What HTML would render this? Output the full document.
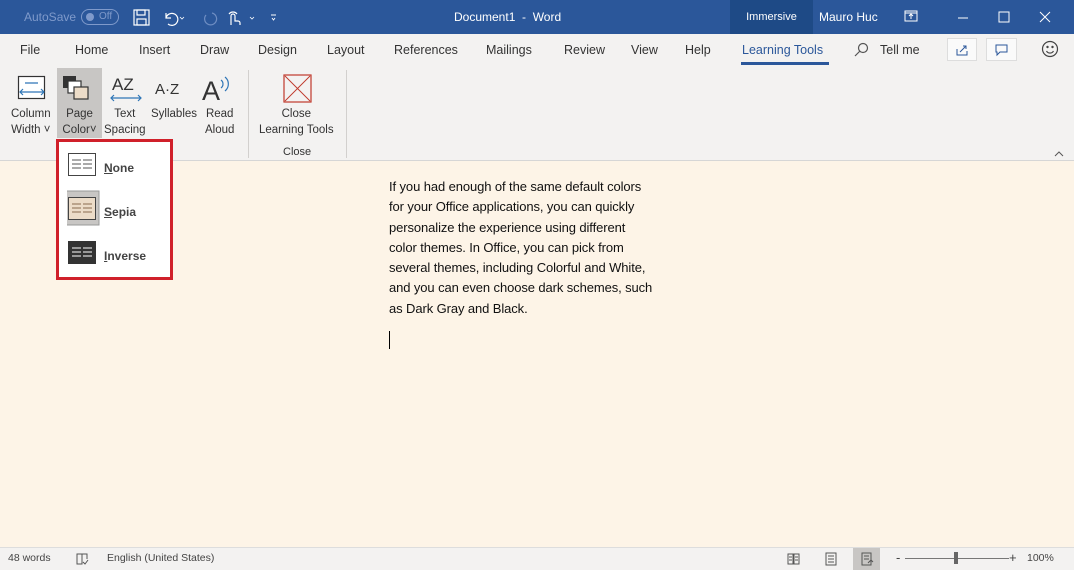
<!DOCTYPE html>
<html><head><meta charset="utf-8"><style>
*{margin:0;padding:0;box-sizing:border-box}
body{width:1074px;height:570px;overflow:hidden;position:relative;font-family:"Liberation Sans",sans-serif;background:#fdf4e7}
.a{position:absolute;white-space:nowrap}
#title{left:0;top:0;width:1074px;height:34px;background:#2b579a;color:#fff;font-size:12px}
#tabs{left:0;top:34px;width:1074px;height:32px;background:#f3f2f1;font-size:12.5px;color:#333}
#rib{left:0;top:66px;width:1074px;height:95px;background:#f3f2f1;border-bottom:1px solid #d6d6d6;font-size:11.5px;color:#333}
#status{left:0;top:547px;width:1074px;height:23px;background:#f3f2f1;border-top:1px solid #ddd;font-size:10.5px;color:#444}
.doc{font-size:13px;color:#111;line-height:20.3px;letter-spacing:-0.1px}
</style></head><body>
<div id="title" class="a">
 <span class="a" style="left:24px;top:10px;color:#7f9acb">AutoSave</span>
 <span class="a" style="left:81px;top:9px;width:38px;height:16px;border:1px solid #7f9acb;border-radius:8px;font-size:10px;color:#7f9acb;padding-left:17px;line-height:14px">Off<span class="a" style="left:4px;top:3px;width:8px;height:8px;border-radius:50%;background:#7f9acb"></span></span>
 <svg class="a" style="left:133px;top:9px" width="150" height="18" fill="none" stroke="#fff" stroke-width="1.2"><rect x="1" y="1" width="15" height="15"/><rect x="4" y="1" width="8" height="5"/><rect x="4" y="10" width="9" height="6"/><path d="M33 4v5h5M33 9a6 6 0 1 1 2 6"/><path d="M47 8l2 2 2-2" stroke-width="0.8"/><path d="M79 4a6 6 0 1 1-6 2" stroke="#6f8ec3"/><path d="M98 16v-9a2 2 0 0 1 4 0v5h3a2 2 0 0 1 2 2v2M96 5a5 5 0 0 1 8 0"/><path d="M117 8l2 2 2-2" stroke-width="0.8"/><path d="M138 6h5M139 9l1.5 2 1.5-2" stroke-width="0.9"/></svg>
 <span class="a" style="left:454px;top:10px">Document1 &nbsp;-&nbsp; Word</span>
 <div class="a" style="left:730px;top:0;width:83px;height:34px;background:#1e4a86;font-size:11px;text-align:center;line-height:35px">Immersive</div>
 <span class="a" style="left:819px;top:10px">Mauro Huc</span>
 <svg class="a" style="left:900px;top:8px" width="170" height="18" fill="none" stroke="#fff" stroke-width="1"><rect x="5" y="3" width="12" height="10"/><path d="M11 11V6M9 8l2-2 2 2M5 5h12"/><path d="M58 10h10"/><rect x="99" y="4" width="10" height="10"/><path d="M140 4l10 10M150 4l-10 10"/></svg>
</div>
<div id="tabs" class="a">
 <span class="a" style="left:20px;top:9px">File</span>
 <span class="a" style="left:75px;top:9px">Home</span>
 <span class="a" style="left:139px;top:9px">Insert</span>
 <span class="a" style="left:200px;top:9px">Draw</span>
 <span class="a" style="left:258px;top:9px">Design</span>
 <span class="a" style="left:327px;top:9px">Layout</span>
 <span class="a" style="left:394px;top:9px">References</span>
 <span class="a" style="left:486px;top:9px">Mailings</span>
 <span class="a" style="left:564px;top:9px">Review</span>
 <span class="a" style="left:631px;top:9px">View</span>
 <span class="a" style="left:685px;top:9px">Help</span>
 <span class="a" style="left:742px;top:9px;color:#2b579a">Learning Tools</span>
 <div class="a" style="left:741px;top:28px;width:88px;height:3px;background:#2b579a"></div>
 <svg class="a" style="left:853px;top:8px" width="16" height="16" fill="none" stroke="#555" stroke-width="1.2"><circle cx="10" cy="6" r="4.5"/><path d="M7 9l-5 5"/></svg>
 <span class="a" style="left:880px;top:9px">Tell me</span>
 <div class="a" style="left:947px;top:4px;width:30px;height:23px;border:1px solid #ddd;background:#fafafa"></div>
 <svg class="a" style="left:955px;top:9px" width="16" height="14" fill="none" stroke="#2b579a" stroke-width="1"><path d="M2 6v6h10V8M5 9l6-6M8 3h3v3"/></svg>
 <div class="a" style="left:986px;top:4px;width:31px;height:23px;border:1px solid #ddd;background:#fafafa"></div>
 <svg class="a" style="left:994px;top:9px" width="16" height="14" fill="none" stroke="#2b579a" stroke-width="1"><path d="M2 2h11v7H6l-3 3V9H2z"/></svg>
 <svg class="a" style="left:1041px;top:6px" width="18" height="18" fill="none" stroke="#444" stroke-width="1.2"><circle cx="9" cy="9" r="7.5"/><circle cx="6.5" cy="7" r=".6" fill="#444"/><circle cx="11.5" cy="7" r=".6" fill="#444"/><path d="M5.5 11a4 4 0 0 0 7 0"/></svg>
</div>
<div id="rib" class="a">
 <div class="a" style="left:57px;top:2px;width:45px;height:70px;background:#c8c6c4"></div>
 <svg class="a" style="left:16px;top:8px" width="320" height="32" fill="none" stroke-width="1.2">
  <rect x="2.5" y="2.5" width="26" height="22" stroke="#333" fill="#fff"/><path d="M9 9h13M4 18h24M7 15l-3 3 3 3M25 15l3 3-3 3" stroke="#2e75b6"/>
  <rect x="47" y="2" width="13" height="12" fill="#333" stroke="none"/><rect x="52" y="7" width="13" height="12" fill="#fff" stroke="#333"/><rect x="58" y="13" width="14" height="12" fill="#ecdcc8" stroke="#333"/>
  <text x="96" y="16" font-size="17" fill="#333" stroke="none" font-family="Liberation Sans">AZ</text><path d="M95 24h30M98 21l-3 3 3 3M122 21l3 3-3 3" stroke="#2e75b6"/>
  <text x="139" y="20" font-size="15" fill="#333" stroke="none" font-family="Liberation Sans">A·Z</text>
  <text x="186" y="26" font-size="27" fill="#333" stroke="none" font-family="Liberation Sans">A</text><path d="M205 6a5 5 0 0 1 0 8M209 3a9 9 0 0 1 0 14" stroke="#2e75b6"/>
  <rect x="268" y="1" width="27" height="27" stroke="#c0392b"/><path d="M269 2l25 25M294 2l-25 25" stroke="#c0392b" stroke-width="0.9"/>
 </svg>
 <div class="a" style="left:11px;top:40px;text-align:center;line-height:16px">Column<br>Width ˅</div>
 <div class="a" style="left:59px;top:40px;text-align:center;line-height:16px;width:41px">Page<br>Color˅</div>
 <div class="a" style="left:104px;top:40px;text-align:center;line-height:16px">Text<br>Spacing</div>
 <div class="a" style="left:151px;top:40px;line-height:16px">Syllables</div>
 <div class="a" style="left:205px;top:40px;text-align:center;line-height:16px">Read<br>Aloud</div>
 <div class="a" style="left:248px;top:4px;width:1px;height:88px;background:#d2d0ce"></div>
 <div class="a" style="left:259px;top:40px;text-align:center;line-height:16px">Close<br>Learning Tools</div>
 <div class="a" style="left:283px;top:80px;font-size:11px">Close</div>
 <div class="a" style="left:346px;top:4px;width:1px;height:88px;background:#d2d0ce"></div>
 <svg class="a" style="left:1053px;top:84px" width="12" height="8" fill="none" stroke="#555"><path d="M2 6l4-4 4 4"/></svg>
</div>
<div class="a" style="left:56px;top:139px;width:117px;height:141px;background:#fff;border:3px solid #d0202a;font-size:12px;font-weight:bold;color:#444">
 <svg class="a" style="left:8px;top:10px" width="36" height="120" stroke-width="1"><rect x="1.5" y="1.5" width="27" height="22" fill="#fff" stroke="#444"/><path d="M5 8h9M16 8h9M5 12h9M16 12h9M5 16h9M16 16h9" stroke="#555"/>
 <rect x="-2" y="39" width="34" height="34" fill="#c8c6c4" stroke="#999"/><rect x="1.5" y="45.5" width="27" height="22" fill="#ecdcc8" stroke="#444"/><path d="M5 52h9M16 52h9M5 56h9M16 56h9M5 60h9M16 60h9" stroke="#8a6c50"/>
 <rect x="1" y="89" width="28" height="23" fill="#333"/><path d="M5 96h9M16 96h9M5 100h9M16 100h9M5 104h9M16 104h9" stroke="#fff"/></svg>
 <span class="a" style="left:45px;top:19px"><u>N</u>one</span>
 <span class="a" style="left:45px;top:63px"><u>S</u>epia</span>
 <span class="a" style="left:45px;top:107px"><u>I</u>nverse</span>
</div>
<div class="a doc" style="left:389px;top:177px">If you had enough of the same default colors<br>for your Office applications, you can quickly<br>personalize the experience using different<br>color themes. In Office, you can pick from<br>several themes, including Colorful and White,<br>and you can even choose dark schemes, such<br>as Dark Gray and Black.</div>
<div class="a" style="left:389px;top:331px;width:1px;height:18px;background:#000"></div>
<div id="status" class="a">
 <span class="a" style="left:8px;top:4px">48 words</span>
 <svg class="a" style="left:75px;top:4px" width="14" height="14" fill="none" stroke="#555"><path d="M2 2h5v10H2zM7 2h5v5M8 10l2 2 3-4"/></svg>
 <span class="a" style="left:107px;top:4px">English (United States)</span>
 <svg class="a" style="left:786px;top:3px" width="100" height="16" fill="none" stroke="#555"><path d="M2 3h5v10H2zM8 3h5v10H8zM3 6h3M3 9h3M9 6h3M9 9h3"/><rect x="40" y="2" width="10" height="12"/><path d="M42 5h6M42 8h6M42 11h6"/></svg>
 <div class="a" style="left:853px;top:0;width:27px;height:22px;background:#c8c6c4"></div>
 <svg class="a" style="left:860px;top:3px" width="16" height="16" fill="none" stroke="#555"><rect x="2" y="2" width="9" height="12"/><path d="M4 5h5M4 8h5M8 12l3-3 2 2"/></svg>
 <span class="a" style="left:896px;top:2px;font-size:13px">-</span>
 <div class="a" style="left:905px;top:10px;width:104px;height:1px;background:#777"></div>
 <div class="a" style="left:954px;top:4px;width:4px;height:12px;background:#666"></div>
 <span class="a" style="left:1009px;top:2px;font-size:13px">+</span>
 <span class="a" style="left:1027px;top:4px">100%</span>
</div>
</body></html>
